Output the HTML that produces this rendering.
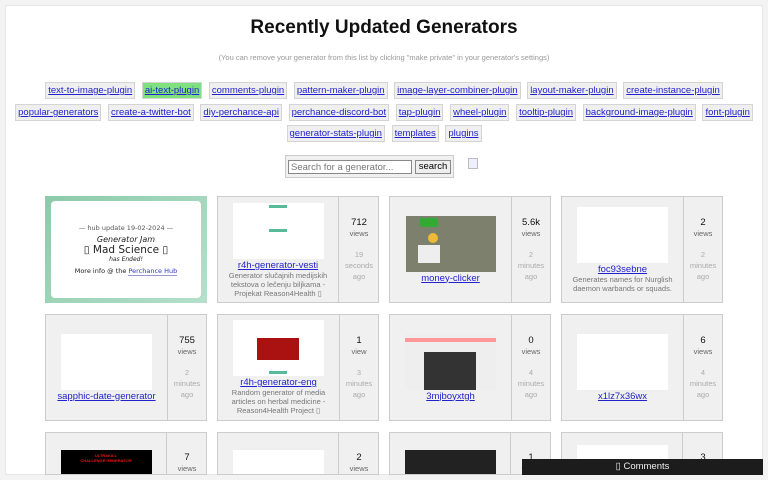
<!DOCTYPE html><html><head><style>
html,body{margin:0;width:768px;height:480px;overflow:hidden}
body{background:#f3f3f3;font-family:"Liberation Sans",sans-serif;position:relative}
.wrap{position:absolute;left:5px;top:5px;width:758px;height:470px;background:#fff;border:1px solid #e6e6e6;box-sizing:border-box}
h1{position:absolute;left:0;width:768px;top:17px;margin:0;text-align:center;font-size:19px;font-weight:bold;color:#111}
.note{position:absolute;left:0;width:768px;top:53px;text-align:center;font-size:7.5px;color:#999}
.tags{position:absolute;left:0;width:768px;text-align:center;font-size:9.5px;line-height:15px;white-space:nowrap}
.tags a{display:inline-block;background:#efefef;border:1px solid #d4d4d4;color:#22c;text-decoration:underline;padding:0 2px;margin:0 2px}
.tags a.g{background:#7ee07e}
.search{position:absolute;left:285px;top:155px;width:169px;height:23px;border:1px solid #ccc;background:#f0f0f0;box-sizing:border-box}
.search .in{position:absolute;left:2px;top:4px;width:124px;height:14px;background:#fff;border:1px solid #888;font-size:9.5px;color:#777;line-height:13px;padding-left:2px;box-sizing:border-box;overflow:hidden;white-space:nowrap}
.search .bt{position:absolute;left:129px;top:4px;width:36px;height:14px;border:1px solid #888;background:#eee;font-size:9.5px;line-height:12px;text-align:center;box-sizing:border-box}
.card{position:absolute;width:162px;height:107px;background:#f0f0f0;border:1px solid #ccc;box-sizing:border-box;overflow:hidden}
.card .l{position:absolute;left:0;top:0;width:121px;height:105px;text-align:center;border-right:1px solid #ccc;display:flex;flex-direction:column;justify-content:center;align-items:center;overflow:hidden}
.card .th{width:91px;height:56px;flex:none;background:#fff;position:relative;overflow:hidden}
.card .nm{font-size:9.5px;color:#22c;text-decoration:underline;margin-top:1px;line-height:11px}
.card .ds{font-size:7.5px;color:#777;line-height:9px;width:110px}
.card .r{position:absolute;left:121px;top:0;width:40px;height:105px;text-align:center;display:flex;flex-direction:column;justify-content:center;overflow:hidden}
.card .n{font-size:9.5px;color:#111;line-height:11px}
.card .v{font-size:7.5px;color:#666;line-height:11px;margin-bottom:10px}
.card .t{font-size:7.5px;color:#aaa;line-height:11px}
.card.s .l,.card.s .r{height:41px;justify-content:flex-start;box-sizing:border-box}
.card.s .l{padding-top:17px}
.card.s .r{padding-top:19px}
.card.s .th{height:24px}
.card.s .v{margin-bottom:0}
.cm{position:absolute;left:522px;top:459px;width:241px;height:16px;background:#1c1c1c;color:#eee;font-size:9.5px;text-align:center;line-height:16px}
.hub{position:absolute;left:45px;top:196px;width:162px;height:107px;background:linear-gradient(135deg,#8ccaa8,#b5e0cc);}
.hub .i{position:absolute;left:6px;top:5px;width:150px;height:97px;background:#fff;border-radius:4px;text-align:center;font-family:"DejaVu Sans",sans-serif;color:#222}
.bot{position:absolute;left:0;top:475px;width:768px;height:5px;background:#f3f3f3}
</style></head><body>
<div class="wrap"></div>
<h1>Recently Updated Generators</h1>
<div class="note">(You can remove your generator from this list by clicking "make private" in your generator's settings)</div>
<div class="tags" style="top:82px"><a>text-to-image-plugin</a> <a class="g">ai-text-plugin</a> <a>comments-plugin</a> <a>pattern-maker-plugin</a> <a>image-layer-combiner-plugin</a> <a>layout-maker-plugin</a> <a>create-instance-plugin</a></div>
<div class="tags" style="top:104px"><a>popular-generators</a> <a>create-a-twitter-bot</a> <a>diy-perchance-api</a> <a>perchance-discord-bot</a> <a>tap-plugin</a> <a>wheel-plugin</a> <a>tooltip-plugin</a> <a>background-image-plugin</a> <a>font-plugin</a></div>
<div class="tags" style="top:125px"><a>generator-stats-plugin</a> <a>templates</a> <a>plugins</a></div>
<div class="search"><div class="in">Search for a generator...</div><div class="bt">search</div></div>
<div style="position:absolute;left:468px;top:158px;width:8px;height:9px;border:1px solid #bbb;background:#eef"></div>

<div class="hub"><div class="i">
<div style="font-size:6.5px;color:#555;margin-top:23px">— hub update 19-02-2024 —</div>
<div style="font-size:8px;font-style:italic;margin-top:3px">Generator Jam</div>
<div style="font-size:10.5px;line-height:12px">▯ Mad Science ▯</div>
<div style="font-size:6px;font-style:italic">has Ended!</div>
<div style="font-size:6.5px;margin-top:4px">More info @ the <span style="color:#33c;border-bottom:1px solid #99c">Perchance Hub</span></div>
</div></div>

<div class="card" style="left:217px;top:196px"><div class="l" style="justify-content:flex-start;padding-top:6px;box-sizing:border-box"><div class="th"><div style="position:absolute;left:36px;top:2px;width:18px;height:3px;background:#5b9"></div><div style="position:absolute;left:36px;top:26px;width:18px;height:3px;background:#5b9"></div></div><div class="nm">r4h-generator-vesti</div><div class="ds">Generator slučajnih medijskih tekstova o lečenju biljkama - Projekat Reason4Health ▯</div></div><div class="r"><div class="n">712</div><div class="v">views</div><div class="t">19<br>seconds<br>ago</div></div></div>

<div class="card" style="left:389px;top:196px"><div class="l"><div class="th" style="background:#7d806c;width:90px;height:56px"><div style="position:absolute;left:14px;top:2px;width:18px;height:9px;background:#3a3;border-radius:2px"></div><div style="position:absolute;left:22px;top:17px;width:10px;height:10px;background:#eb3;border-radius:50%"></div><div style="position:absolute;left:12px;top:29px;width:22px;height:18px;background:#eee"></div></div><div class="nm">money-clicker</div></div><div class="r"><div class="n">5.6k</div><div class="v">views</div><div class="t">2<br>minutes<br>ago</div></div></div>

<div class="card" style="left:561px;top:196px"><div class="l"><div class="th"></div><div class="nm">foc93sebne</div><div class="ds">Generates names for Nurglish daemon warbands or squads.</div></div><div class="r"><div class="n">2</div><div class="v">views</div><div class="t">2<br>minutes<br>ago</div></div></div>

<div class="card" style="left:45px;top:314px"><div class="l"><div class="th"></div><div class="nm">sapphic-date-generator</div></div><div class="r"><div class="n">755</div><div class="v">views</div><div class="t">2<br>minutes<br>ago</div></div></div>

<div class="card" style="left:217px;top:314px"><div class="l"><div class="th"><div style="position:absolute;left:24px;top:18px;width:42px;height:22px;background:#a11"></div><div style="position:absolute;left:36px;top:51px;width:18px;height:3px;background:#5b9"></div></div><div class="nm">r4h-generator-eng</div><div class="ds">Random generator of media articles on herbal medicine - Reason4Health Project ▯</div></div><div class="r"><div class="n">1</div><div class="v">view</div><div class="t">3<br>minutes<br>ago</div></div></div>

<div class="card" style="left:389px;top:314px"><div class="l"><div class="th" style="background:#eee"><div style="position:absolute;left:0;top:4px;width:91px;height:4px;background:#f99"></div><div style="position:absolute;left:19px;top:18px;width:52px;height:38px;background:#333"></div></div><div class="nm">3mjboyxtgh</div></div><div class="r"><div class="n">0</div><div class="v">views</div><div class="t">4<br>minutes<br>ago</div></div></div>

<div class="card" style="left:561px;top:314px"><div class="l"><div class="th"></div><div class="nm">x1lz7x36wx</div></div><div class="r"><div class="n">6</div><div class="v">views</div><div class="t">4<br>minutes<br>ago</div></div></div>

<div class="card s" style="left:45px;top:432px;height:43px"><div class="l"><div class="th" style="background:#000"><div style="color:#e11;font-size:4px;font-weight:bold;margin-top:3px">ULTRAKILL<br>CHALLENGE GENERATOR</div></div></div><div class="r"><div class="n">7</div><div class="v">views</div></div></div>
<div class="card s" style="left:217px;top:432px;height:43px"><div class="l"><div class="th"></div></div><div class="r"><div class="n">2</div><div class="v">views</div></div></div>
<div class="card s" style="left:389px;top:432px;height:43px"><div class="l"><div class="th" style="background:#222"></div></div><div class="r"><div class="n">1</div><div class="v">views</div></div></div>
<div class="card s" style="left:561px;top:432px;height:43px"><div class="l" style="padding-top:12px"><div class="th"></div></div><div class="r"><div class="n">3</div><div class="v">views</div></div></div>
<div class="bot"></div>
<div class="cm">▯ Comments</div>
</body></html>
